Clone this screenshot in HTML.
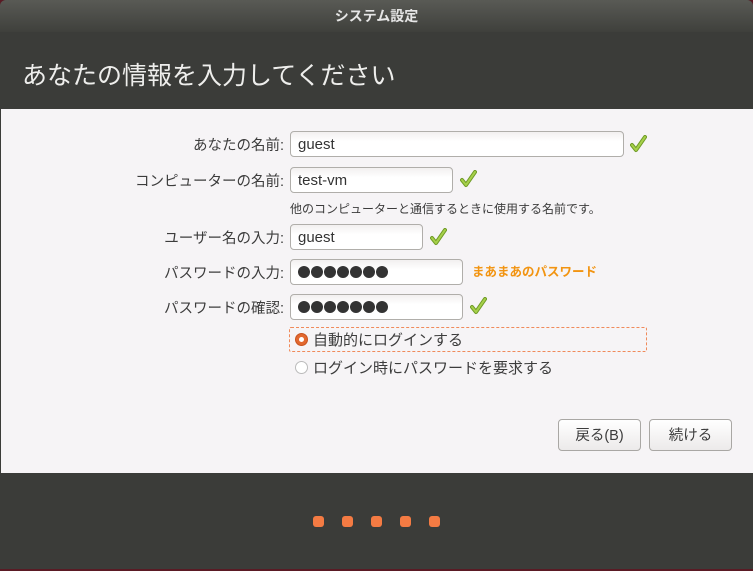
<!DOCTYPE html>
<html><head><meta charset="utf-8"><style>
*{margin:0;padding:0;box-sizing:border-box}
body{width:753px;height:571px;overflow:hidden;background:#5a1a24;font-family:"Liberation Sans","Noto Sans CJK JP",sans-serif;position:relative}
.win{position:absolute;left:0;top:0;width:753px;height:569px;background:#3b3c39;border-radius:6px 6px 0 0;overflow:hidden}
.tb{position:absolute;left:0;top:0;width:753px;height:32px;background:linear-gradient(#595a55,#3f403c);color:#e6e6e6;font-size:14px;text-align:center;line-height:33px;font-weight:bold}
.hd{position:absolute;left:22px;top:56px;color:#eeeeec;font-size:25px}
.main{position:absolute;left:1px;top:109px;width:752px;height:364px;background:#f6f4f6}
.lbl{position:absolute;right:469px;font-size:14.5px;color:#3c3c3c;text-align:right;white-space:nowrap;line-height:20px}
.in{position:absolute;left:290px;height:26px;border:1px solid #b0aeaa;border-radius:4px;background:linear-gradient(#f2f0f0,#fff 40%);font-size:15px;color:#333;padding-left:7px;line-height:26px}
.in i{display:inline-block;width:12px;height:12px;border-radius:50%;background:#333;margin-right:1px;margin-top:6px;vertical-align:top}
.ck{position:absolute;width:17px;height:18px}
.t{position:absolute;font-size:15px;color:#3c3c3c;white-space:nowrap;line-height:20px}
.btn{position:absolute;top:419px;height:32px;width:83px;border:1px solid #a9a7a4;border-radius:4px;background:linear-gradient(#fff,#eceaea);font-size:14.5px;color:#3c3c3c;text-align:center;line-height:32px}
.dot{position:absolute;top:516px;width:11px;height:11px;border-radius:3px;background:#f47b43}
</style></head><body>
<svg width="0" height="0" style="position:absolute"><defs><g id="c"><path d="M2 10 L6 15 L15 2" fill="none" stroke="#6e9a25" stroke-width="4" stroke-linecap="round" stroke-linejoin="round"/><path d="M2 10 L6 15 L15 2" fill="none" stroke="#a6d04a" stroke-width="2" stroke-linecap="round" stroke-linejoin="round"/></g></defs></svg>
<div class="win">
<div class="tb">システム設定</div>
<div class="hd">あなたの情報を入力してください</div>
<div class="main"></div>
<div class="lbl" style="top:136px">あなたの名前:</div>
<div class="in" style="top:131px;width:334px">guest</div>
<svg class="ck" style="left:630px;top:135px"><use href="#c"/></svg>
<div class="lbl" style="top:172px">コンピューターの名前:</div>
<div class="in" style="top:167px;width:163px">test-vm</div>
<svg class="ck" style="left:460px;top:170px"><use href="#c"/></svg>
<div class="t" style="left:290px;top:199px;font-size:12px">他のコンピューターと通信するときに使用する名前です。</div>
<div class="lbl" style="top:229px">ユーザー名の入力:</div>
<div class="in" style="top:224px;width:133px">guest</div>
<svg class="ck" style="left:430px;top:228px"><use href="#c"/></svg>
<div class="lbl" style="top:264px">パスワードの入力:</div>
<div class="in" style="top:259px;width:173px"><i></i><i></i><i></i><i></i><i></i><i></i><i></i></div>
<div class="t" style="left:472px;top:262px;font-size:12.5px;color:#f29411;font-weight:bold">まあまあのパスワード</div>
<div class="lbl" style="top:299px">パスワードの確認:</div>
<div class="in" style="top:294px;width:173px"><i></i><i></i><i></i><i></i><i></i><i></i><i></i></div>
<svg class="ck" style="left:470px;top:297px"><use href="#c"/></svg>
<div style="position:absolute;left:289px;top:327px;width:358px;height:25px;border:1px dashed #f08a5a;border-radius:2px"></div>
<div style="position:absolute;left:295px;top:333px;width:13px;height:13px;border-radius:50%;background:#e2682f;border:1px solid #c95420"><div style="position:absolute;left:3px;top:3px;width:5px;height:5px;border-radius:50%;background:#fff"></div></div>
<div class="t" style="left:313px;top:331px">自動的にログインする</div>
<div style="position:absolute;left:295px;top:361px;width:13px;height:13px;border-radius:50%;background:#fff;border:1px solid #bbb"></div>
<div class="t" style="left:313px;top:359px">ログイン時にパスワードを要求する</div>
<div class="btn" style="left:558px">戻る(B)</div>
<div class="btn" style="left:649px">続ける</div>
<div class="dot" style="left:313px"></div>
<div class="dot" style="left:342px"></div>
<div class="dot" style="left:371px"></div>
<div class="dot" style="left:400px"></div>
<div class="dot" style="left:429px"></div>
</div>
</body></html>
